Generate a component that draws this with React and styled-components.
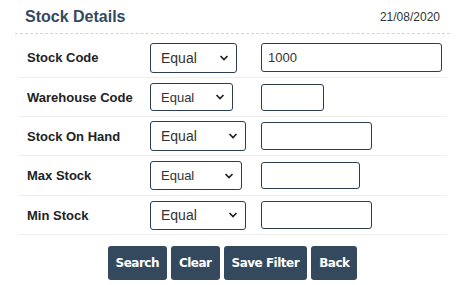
import React from 'react';
import styled, { createGlobalStyle } from 'styled-components';

const GlobalStyle = createGlobalStyle`
  body {
    margin: 0;
    background: #fff;
    font-family: "Liberation Sans", Arial, sans-serif;
  }
`;

const rows = [
  { label: 'Stock Code', selectW: 87, selectH: 30, inputW: 181, inputH: 29, value: '1000', rowH: 44, font: 14 },
  { label: 'Warehouse Code', selectW: 83, selectH: 28, inputW: 63, inputH: 27, value: '', rowH: 39, font: 13 },
  { label: 'Stock On Hand', selectW: 96, selectH: 30, inputW: 111, inputH: 28, value: '', rowH: 39, font: 14 },
  { label: 'Max Stock', selectW: 92, selectH: 29, inputW: 99, inputH: 27, value: '', rowH: 40, font: 13 },
  { label: 'Min Stock', selectW: 96, selectH: 29, inputW: 111, inputH: 28, value: '', rowH: 39, font: 14 },
];

function App() {
  return (
    <>
      <GlobalStyle />
      <Page>
        <Header>
          <Title>Stock Details</Title>
          <DateText>21/08/2020</DateText>
        </Header>
        <Rows>
          {rows.map((r) => (
            <Row key={r.label} $h={r.rowH}>
              <Label>{r.label}</Label>
              <SelectCell>
                <SelectWrap $w={r.selectW} $h={r.selectH}>
                  <Select $font={r.font} defaultValue="Equal">
                    <option>Equal</option>
                    <option>Greater</option>
                    <option>Less</option>
                  </Select>
                  <Chevron width="10" height="7" viewBox="0 0 10 7">
                    <path d="M1.5 1.5 L5 5 L8.5 1.5" fill="none" stroke="#222" strokeWidth="1.7" />
                  </Chevron>
                </SelectWrap>
              </SelectCell>
              <Input $w={r.inputW} $h={r.inputH} defaultValue={r.value} />
            </Row>
          ))}
          <Buttons>
            <Button>Search</Button>
            <Button>Clear</Button>
            <Button>Save Filter</Button>
            <Button>Back</Button>
          </Buttons>
        </Rows>
      </Page>
    </>
  );
}

export default App;

const Page = styled.div`
  width: 471px;
  padding: 0 21px 0 15px;
  box-sizing: border-box;
`;

const Header = styled.div`
  display: flex;
  align-items: center;
  justify-content: space-between;
  height: 33px;
  padding: 0 10px;
  border-bottom: 1px dashed #d4d4d4;
`;

const Title = styled.h2`
  margin: 0;
  font-size: 16px;
  font-weight: bold;
  color: #34495e;
`;

const DateText = styled.span`
  font-size: 12px;
  color: #333;
  margin-top: 1px;
`;

const Rows = styled.div`
  padding: 0 3px;
`;

const Row = styled.div`
  display: flex;
  align-items: center;
  height: ${(p) => p.$h}px;
  border-bottom: 1px solid #eeeeee;
  box-sizing: border-box;
  padding-top: ${(p) => (p.$h > 40 ? 4 : 0)}px;
`;

const Label = styled.div`
  width: 132px;
  padding-left: 9px;
  box-sizing: border-box;
  font-size: 13px;
  font-weight: bold;
  color: #222;
`;

const SelectCell = styled.div`
  width: 111px;
`;

const SelectWrap = styled.div`
  position: relative;
  width: ${(p) => p.$w}px;
  height: ${(p) => p.$h}px;
`;

const Select = styled.select`
  appearance: none;
  width: 100%;
  height: 100%;
  border: 1px solid #2c3e50;
  border-radius: 3px;
  background: #fff;
  padding: 0 0 0 10px;
  font-family: "Liberation Sans", Arial, sans-serif;
  font-size: ${(p) => p.$font}px;
  color: #333;
  outline: none;
`;

const Chevron = styled.svg`
  position: absolute;
  right: 8px;
  top: 50%;
  transform: translateY(-50%);
  pointer-events: none;
`;

const Input = styled.input`
  width: ${(p) => p.$w}px;
  height: ${(p) => p.$h}px;
  box-sizing: border-box;
  border: 1px solid #2c3e50;
  border-radius: 3px;
  padding: 0 6px;
  font-family: "Liberation Sans", Arial, sans-serif;
  font-size: 13px;
  color: #333;
  outline: none;
`;

const Buttons = styled.div`
  display: flex;
  justify-content: center;
  gap: 4px;
  padding-top: 11px;
`;

const Button = styled.button`
  height: 34px;
  padding: 0 8px;
  border: none;
  border-radius: 3px;
  background: #34495e;
  color: #fff;
  font-family: "DejaVu Sans", Tahoma, sans-serif;
  font-size: 12px;
  font-weight: bold;
  letter-spacing: -0.5px;
  cursor: pointer;
`;
